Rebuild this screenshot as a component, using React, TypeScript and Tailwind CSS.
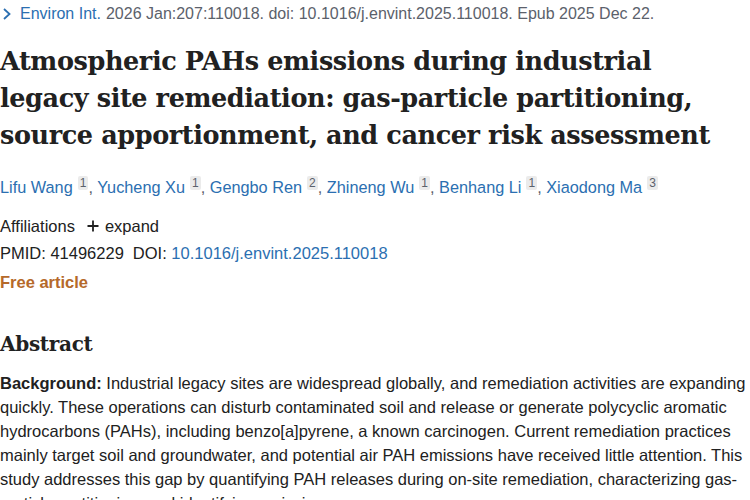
import React from "react";

const authors = [
  { name: "Lifu Wang", sup: "1" },
  { name: "Yucheng Xu", sup: "1" },
  { name: "Gengbo Ren", sup: "2" },
  { name: "Zhineng Wu", sup: "1" },
  { name: "Benhang Li", sup: "1" },
  { name: "Xiaodong Ma", sup: "3" },
];

const App = () => {
  return (
    <div className="w-[750px] h-[500px] overflow-hidden bg-white text-[#212121] font-['Liberation_Sans',Arial,sans-serif]">
      {/* citation line */}
      <div className="flex items-center h-[28px] text-[16px] text-[#5b616b]">
        <svg width="10" height="14" viewBox="0 0 10 14" className="ml-[2px] mr-[8px]">
          <path d="M2 2 L7.5 7 L2 12" fill="none" stroke="#2b6fb1" strokeWidth="1.8" />
        </svg>
        <span className="text-[#2b6fb1]">Environ Int.</span>
        <span className="ml-[5px]">2026 Jan:207:110018. doi: 10.1016/j.envint.2025.110018. Epub 2025 Dec 22.</span>
      </div>

      {/* title */}
      <h1 className="mt-[15px] text-[25.5px] leading-[37px] font-bold font-['DejaVu_Serif','Liberation_Serif',serif] tracking-[-0.4px] text-[#212121] whitespace-nowrap">
        Atmospheric PAHs emissions during industrial
        <br />
        legacy site remediation: gas-particle partitioning,
        <br />
        source apportionment, and cancer risk assessment
      </h1>

      {/* authors */}
      <div className="mt-[21px] text-[16.3px] leading-[24px] text-[#2b6fb1]">
        {authors.map((a, i) => (
          <span key={i}>
            {a.name}
            <sup className="ml-[5px] px-[2px] text-[12px] text-[#5b616b] bg-[#ebebeb] rounded-[2px] top-[-6px]">
              {a.sup}
            </sup>
            {i < authors.length - 1 && <span className="text-[#5b616b]">, </span>}
          </span>
        ))}
      </div>

      {/* affiliations */}
      <div className="mt-[15px] flex items-center text-[16.5px] leading-[24px]">
        <span>Affiliations</span>
        <svg width="12" height="12" viewBox="0 0 12 12" className="ml-[12px]">
          <path d="M6 0.5 V11.5 M0.5 6 H11.5" stroke="#212121" strokeWidth="1.8" />
        </svg>
        <span className="ml-[6px]">expand</span>
      </div>

      <div className="mt-[3px] text-[16.5px] leading-[24px]">
        PMID: 41496229<span className="ml-[9px]">DOI: </span>
        <span className="text-[#2b6fb1]">10.1016/j.envint.2025.110018</span>
      </div>

      <div className="mt-[5px] text-[16.5px] leading-[24px] font-bold text-[#b5692a]">Free article</div>

      {/* abstract */}
      <h2 className="mt-[35px] text-[20px] leading-[30px] font-bold font-['DejaVu_Serif','Liberation_Serif',serif] tracking-[-0.3px]">
        Abstract
      </h2>
      <p className="mt-[12px] text-[16.5px] leading-[24px] text-[#212121]">
        <strong>Background:</strong> Industrial legacy sites are widespread globally, and remediation activities are expanding quickly. These operations can disturb contaminated soil and release or generate polycyclic aromatic hydrocarbons (PAHs), including benzo[a]pyrene, a known carcinogen. Current remediation practices mainly target soil and groundwater, and potential air PAH emissions have received little attention. This study addresses this gap by quantifying PAH releases during on-site remediation, characterizing gas-particle partitioning, and identifying emission sources.
      </p>
    </div>
  );
};

export default App;
